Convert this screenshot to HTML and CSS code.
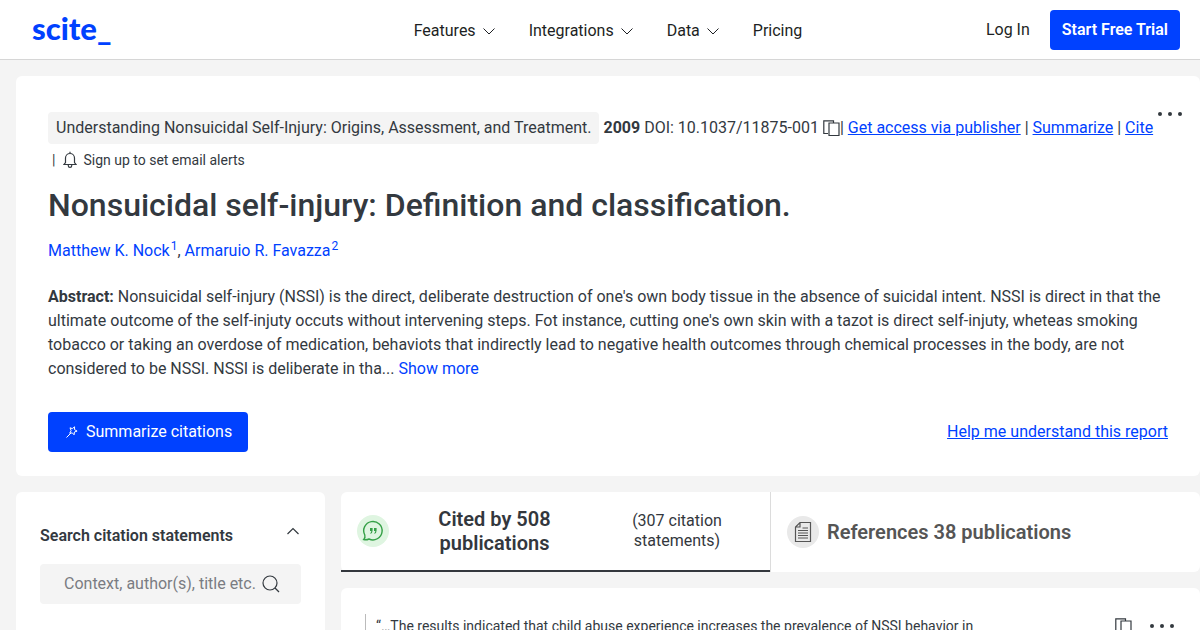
FILE: index.html
```html
<!DOCTYPE html>
<html lang="en">
  <head>
    <meta charset="UTF-8" />
    <meta name="viewport" content="width=device-width, initial-scale=1.0" />
    <title>Nonsuicidal self-injury: Definition and classification.</title>
    <link rel="stylesheet" href="styles.css">
  </head>
  <body>
    <header class="header">
      <a class="logo" href="#">scite_</a>
      <nav class="nav">
        <button type="button" class="nav-item">Features
          <svg width="14" height="10" viewBox="0 0 14 10"><path d="M1.5 2.5 7 8l5.5-5.5" /></svg>
        </button>
        <button type="button" class="nav-item">Integrations
          <svg width="14" height="10" viewBox="0 0 14 10"><path d="M1.5 2.5 7 8l5.5-5.5" /></svg>
        </button>
        <button type="button" class="nav-item">Data
          <svg width="14" height="10" viewBox="0 0 14 10"><path d="M1.5 2.5 7 8l5.5-5.5" /></svg>
        </button>
        <a class="nav-item" href="#">Pricing</a>
      </nav>
      <div class="account">
        <a class="login" href="#">Log In</a>
        <a class="btn trial" href="#">Start Free Trial</a>
      </div>
    </header>

    <main class="page">
      <section class="card paper">
        <div class="paper-top">
          <div class="meta">
            <span class="journal">Understanding Nonsuicidal Self-Injury: Origins, Assessment, and Treatment.</span>
            <b>2009</b> DOI: 10.1037/11875-001
            <button type="button" class="icon-btn copy" aria-label="Copy DOI"><svg width="17" height="17" viewBox="0 0 17 17"><path d="M5 13.5H.8V.8h9.7v2M6 3h10v12.5H6z" /></svg></button>|
            <a href="#">Get access via publisher</a> |
            <a href="#">Summarize</a> |
            <a href="#">Cite</a>
            <div class="alerts">
              <span>|</span>
              <button type="button" class="icon-btn alert-btn">
                <svg width="14" height="18" viewBox="0 0 14 18"><path d="M1 13.5h12l-1.5-2V7a4.5 4.5 0 0 0-9 0v4.5zM7 2.5V.8M5.3 14v.7a1.7 1.7 0 0 0 3.4 0V14" /></svg>
                Sign up to set email alerts
              </button>
            </div>
          </div>
          <button type="button" class="icon-btn more" aria-label="More actions">
            <svg width="28" height="6" viewBox="0 0 28 6"><circle cx="4" cy="3" r="2" /><circle cx="14" cy="3" r="2" /><circle cx="24" cy="3" r="2" /></svg>
          </button>
        </div>
        <h1>Nonsuicidal self-injury: Definition and classification.</h1>
        <p class="authors"><a href="#">Matthew K. Nock<sup>1</sup></a>, <a href="#">Armaruio R. Favazza<sup>2</sup></a></p>
        <p class="abstract"><b>Abstract:</b> Nonsuicidal self-injury (NSSI) is the direct, deliberate destruction of one's own body tissue in the absence of suicidal intent. NSSI is direct in that the ultimate outcome of the self-injuty occuts without intervening steps. Fot instance, cutting one's own skin with a tazot is direct self-injuty, wheteas smoking tobacco or taking an overdose of medication, behaviots that indirectly lead to negative health outcomes through chemical processes in the body, are not considered to be NSSI. NSSI is deliberate in tha... <a href="#">Show more</a></p>
        <div class="paper-actions">
          <button type="button" class="btn summarize">
            <svg width="12" height="12" viewBox="0 0 12 12"><path d="M.5 11.5 5 7M4 1.8l2.3.8L8.6.8l-.1 2.8 2.6 1.5-2.7.9-.3 2.8L6.3 6.9l-2.6.3 1.4-2.5z" /></svg>
            Summarize citations
          </button>
          <a href="#">Help me understand this report</a>
        </div>
      </section>

      <div class="columns">
        <aside class="card sidebar">
          <div class="sidebar-head">
            <label for="search">Search citation statements</label>
            <button type="button" class="icon-btn" aria-label="Collapse"><svg width="14" height="10" viewBox="0 0 14 10"><path d="M1.5 8 7 2.5 12.5 8" /></svg></button>
          </div>
          <div class="search">
            <input type="text" id="search" placeholder="Context, author(s), title etc." />
            <svg width="18" height="18" viewBox="0 0 18 18"><circle cx="8" cy="8" r="7" /><path d="m13 13 4 4" /></svg>
          </div>
        </aside>

        <div class="results">
          <div class="card tabs">
            <button type="button" class="tab active">
              <svg class="round green" width="32" height="32" viewBox="0 0 32 32">
                <path d="M6.800 24.600c1.200-1.200 1.500-2.600 1-4.600A9.200 9.200 0 1 1 12 24c-1.800.9-3.400 1-5.200.6z" />
                <path class="quote" d="M13 13h2.600v2.600q0 2.400-2 3.200l-.4-.6q1.100-.8 1.100-2.100H13zM17 13h2.600v2.600q0 2.400-2 3.200l-.4-.6q1.100-.8 1.100-2.100H17z" />
              </svg>
              <span class="tab-title">Cited by 508 publications</span>
              <span class="tab-count">(307 citation statements)</span>
            </button>
            <button type="button" class="tab">
              <svg class="round grey" width="32" height="32" viewBox="0 0 32 32">
                <path d="M13 6.5h10.5v19h-15V11zM13 6.5V11H8.5" />
                <path class="lines" d="M15.5 12H21M11 14.5h10M11 17h10M11 19.5h10M11 22h10" />
              </svg>
              <span class="tab-title">References 38 publications</span>
            </button>
          </div>
          <article class="card citation">
            <p class="snippet">“…The results indicated that child abuse experience increases the prevalence of NSSI behavior in</p>
            <button type="button" class="icon-btn copy" aria-label="Copy citation"><svg width="17" height="17" viewBox="0 0 17 17"><path d="M5 13.5H.8V.8h9.7v2M6 3h10v12.5H6z" /></svg></button>
            <button type="button" class="icon-btn more" aria-label="More actions">
              <svg width="28" height="6" viewBox="0 0 28 6"><circle cx="4" cy="3" r="2" /><circle cx="14" cy="3" r="2" /><circle cx="24" cy="3" r="2" /></svg>
            </button>
          </article>
        </div>
      </div>
    </main>
  </body>
</html>
```
FILE: styles.css
```css
* {
  box-sizing: border-box;
}

body {
  margin: 0;
  background-color: #f4f4f4;
  color: #33393f;
  font-family: Roboto, "Liberation Sans", sans-serif;
  font-size: 16px;
  line-height: 24px;
}

a {
  color: #0041ff;
}

button,
input {
  font: inherit;
  color: inherit;
}

button {
  border: none;
  padding: 0;
  background: none;
  cursor: pointer;
}

svg {
  fill: none;
  stroke: currentColor;
  stroke-width: 1.2;
  flex: none;
}

h1,
p {
  margin: 0;
}

.header {
  display: flex;
  align-items: center;
  justify-content: space-between;
  height: 60px;
  padding: 0 20px 0 32px;
  background-color: white;
  border-bottom: 1px solid #d6d6d6;
  color: #1d1f23;
}

.logo {
  flex: 1;
  padding-bottom: 4px;
  font-family: Lato, sans-serif;
  font-size: 31px;
  font-weight: 900;
  text-decoration: none;
}

.nav {
  display: flex;
  gap: 33px;
  padding: 2px 0 0 4px;
}

.nav-item {
  display: flex;
  align-items: center;
  gap: 6px;
  color: inherit;
  text-decoration: none;
}

.nav-item svg {
  stroke-width: 1;
}

.account {
  display: flex;
  flex: 1;
  align-items: center;
  justify-content: flex-end;
  gap: 20px;
}

.login {
  color: inherit;
  text-decoration: none;
}

.btn {
  display: flex;
  align-items: center;
  height: 40px;
  border-radius: 4px;
  background-color: #0041ff;
  color: white;
  text-decoration: none;
}

.btn svg {
  stroke-width: 1;
}

.trial {
  padding: 0 12px;
  font-weight: 600;
}

.page {
  padding: 16px 0 0 16px;
}

.card {
  background-color: white;
  border-radius: 6px;
}

.paper {
  padding: 36px 32px 24px;
}

.paper-top {
  display: flex;
  align-items: flex-start;
}

.meta {
  flex: 1;
  line-height: 32px;
}

.journal {
  display: inline-block;
  padding: 0 8px;
  border-radius: 4px;
  background-color: #f4f4f4;
}

.icon-btn {
  display: inline-flex;
  align-items: center;
}

.copy {
  vertical-align: middle;
}

.alerts {
  display: flex;
  gap: 8px;
  padding-left: 4px;
  font-size: 14px;
}

.alert-btn {
  gap: 6px;
}

.more {
  height: 4px;
  margin-right: -16px;
}

.more svg {
  fill: currentColor;
  stroke: none;
}

h1 {
  margin-top: 9px;
  font-size: 32px;
  font-weight: 500;
  line-height: 40px;
}

.authors {
  margin-top: 14px;
}

.authors a,
.abstract a {
  text-decoration: none;
}

sup {
  padding-left: 1px;
  font-size: 12px;
  line-height: 0;
}

.abstract {
  margin-top: 22px;
}

.paper-actions {
  display: flex;
  align-items: center;
  justify-content: space-between;
  margin-top: 31px;
}

.summarize {
  gap: 8px;
  padding: 0 16px 0 18px;
}

.columns {
  display: flex;
  gap: 16px;
  margin-top: 16px;
}

.sidebar {
  flex: none;
  width: 309px;
  min-height: 180px;
  padding: 32px 24px;
}

.sidebar-head {
  display: flex;
  justify-content: space-between;
  font-weight: 600;
}

.sidebar-head .icon-btn {
  height: 14px;
  margin-right: 1px;
}

.search {
  display: flex;
  align-items: center;
  gap: 6px;
  height: 40px;
  margin-top: 16px;
  padding: 0 21px 0 24px;
  border-radius: 4px;
  background-color: #f4f4f4;
}

.search input {
  flex: 1;
  min-width: 0;
  padding: 0;
  border: none;
  outline: none;
  background: none;
}

.search input::placeholder {
  color: #7a7c82;
}

.results {
  flex: 1;
  min-width: 0;
}

.tabs {
  display: flex;
}

.tab {
  display: flex;
  flex: 1 1 0;
  align-items: center;
  gap: 8px;
  height: 80px;
  padding: 0 16px;
  color: #555;
}

.tab + .tab {
  border-left: 1px solid #dcdcdc;
}

.tab.active {
  border-bottom: 2px solid #33373d;
  color: #33373d;
}

.tab-title {
  font-size: 20px;
  font-weight: 600;
}

.active .tab-title {
  flex: 1 1 0;
  padding: 0 40px;
}

.tab-count {
  flex: 0 1 154px;
  padding: 0 24px;
  line-height: 20px;
}

.round {
  border-radius: 50%;
}

.green {
  background-color: #dff5e1;
  color: #35a047;
  stroke-width: 1.4;
}

.grey {
  background-color: #e9e9e9;
}

.quote {
  fill: currentColor;
  stroke: none;
}

.lines {
  stroke-width: 1;
}

.citation {
  display: flex;
  align-items: center;
  margin-top: 16px;
  padding: 26px 40px 24px 24px;
}

.snippet {
  flex: 1;
  padding-left: 10px;
  border-left: 1px solid #bbb;
  font-size: 14px;
}

.citation .copy {
  margin-right: 16px;
}
```
